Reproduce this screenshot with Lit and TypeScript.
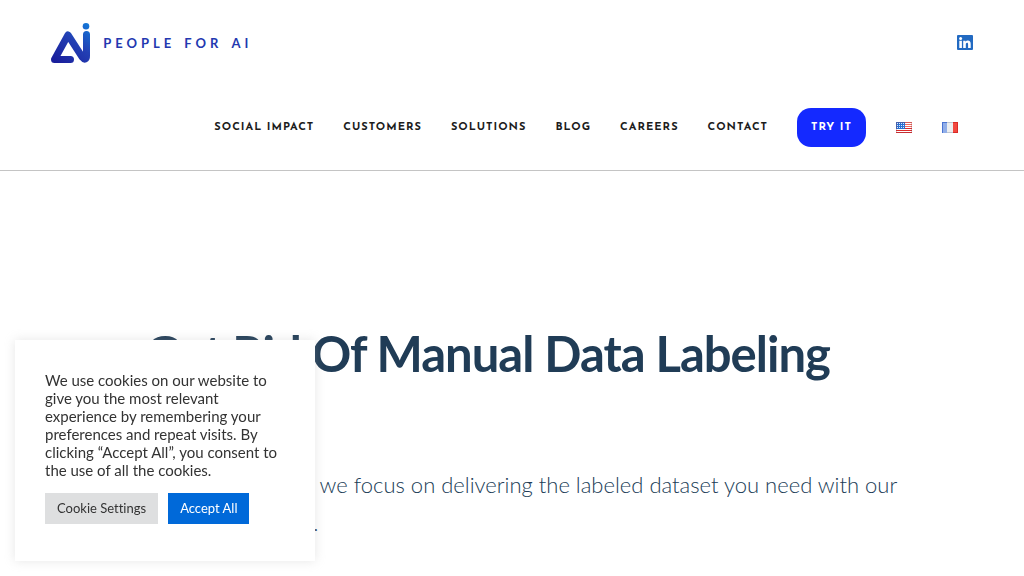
import { LitElement, html, css, svg } from "lit";
import { customElement, state } from "lit/decorators.js";

const LINKS = ["Social Impact", "Customers", "Solutions", "Blog", "Careers", "Contact"];

const logoMark = html`
  <svg class="mark" viewBox="0 0 40 42" width="40" height="42" aria-hidden="true">
    <defs>
      <linearGradient id="ink" gradientUnits="userSpaceOnUse" x1="6" y1="40" x2="38" y2="2">
        <stop offset="0" stop-color="#1a1f9c" />
        <stop offset="0.55" stop-color="#2340b4" />
        <stop offset="1" stop-color="#1478d8" />
      </linearGradient>
    </defs>
    <path d="M19.500 37.500H3.500L17 13L31.500 35.500Q33 37.500 34.300 37T35.500 34V12.500" fill="none" stroke="url(#ink)"
      stroke-width="7" stroke-linecap="round" stroke-linejoin="round" />
    <circle cx="35" cy="4.300" r="3.300" fill="url(#ink)" />
  </svg>`;

const linkedIn = html`
  <svg viewBox="0 0 16 16" width="16" height="16" aria-hidden="true">
    <rect width="16" height="15" rx="1" fill="#226ac2" />
    <g fill="#fff">
      <circle cx="3.600" cy="3.500" r="1.500" />
      <path d="M2.300 5.800h2.600V13H2.300zM6.200 5.800h2.300v1c.5-.8 1.300-1.200 2.300-1.200 2.100 0 2.900 1.300 2.900 3.400v4h-2.600V9.400c0-1-.3-1.600-1-1.600-.9 0-1.300.7-1.300 1.800V13H6.200z" />
    </g>
  </svg>`;

const usFlag = html`
  <svg viewBox="0 0 16 11" width="16" height="11" aria-hidden="true">
    <rect width="16" height="11" fill="#fff" />
    ${[0, 2, 4, 6, 8, 10].map((y) => svg`<rect y=${y} width="16" height="1" fill=${y > 4 ? "#dc2a2a" : "#f4685c"} />`)}
    <rect width="9" height="7" fill="#2a6fd0" />
    ${[1, 3, 5].map((y) => [1, 3, 5, 7].map((x) => svg`<rect x=${x} y=${y} width="1" height="1" fill="#dce9fb" />`))}
    <path d="M.5 .5h15v10H.5z" fill="none" stroke="#8b3b4b" stroke-opacity=".3" />
  </svg>`;

const frFlag = html`
  <svg viewBox="0 0 16 11" width="16" height="11" aria-hidden="true">
    <rect width="5" height="11" fill="#91aee8" />
    <path d="M0 0h5v1H1v10H0z" fill="#4a74d2" />
    <rect x="5" width="6" height="11" fill="#eceeef" />
    <rect x="11" width="5" height="11" fill="#f2493f" />
    <path d="M11 0h5v11h-5v-1h4V1h-4z" fill="#d92a26" />
    <path d="M5 0h6v1H5zM5 10h6v1H5z" fill="#bfc6cf" />
  </svg>`;

@customElement("site-header")
class SiteHeader extends LitElement {
  static styles = css`
    :host { display: block; border-bottom: 1px solid #c4c4c4; background: #fff; }
    .top { display: flex; justify-content: space-between; align-items: center; padding: 0 5%; height: 85px; }
    .logo { display: flex; align-items: center; gap: 12px; text-decoration: none; }
    .mark { display: block; }
    .name { display: flex; gap: 9px; font: 700 13px/16px Lato, sans-serif; letter-spacing: 4px; color: #2338b0; white-space: nowrap; }
    .social { display: block; line-height: 0; }
    .nav { display: flex; justify-content: flex-end; align-items: center; gap: 30px; height: 85px; padding: 0 66px 0 0; }
    .links { display: flex; align-items: center; gap: 29px; }
    .link { font: 700 11px/16px "Josefin Sans", Lato, sans-serif; letter-spacing: 1px; color: #1c1c1c;
      text-transform: uppercase; text-decoration: none; white-space: nowrap; }
    .cta { background: #1429ff; color: #fff; padding: 12px 14px 11px; border-radius: 14px; }
    .flag { line-height: 0; }
  `;
  render() {
    return html`
      <div class="top">
        <a class="logo" href="#">${logoMark}<span class="name"><span>PEOPLE</span> <span>FOR</span> <span>AI</span></span></a>
        <a class="social" href="#" aria-label="LinkedIn">${linkedIn}</a>
      </div>
      <nav class="nav">
        <div class="links">
          ${LINKS.map((l) => html`<a class="link" href="#">${l}</a>`)}
          <a class="link cta" href="#">Try it</a>
        </div>
        <a class="flag" href="#" aria-label="English">${usFlag}</a>
        <a class="flag" href="#" aria-label="Français">${frFlag}</a>
      </nav>`;
  }
}

@customElement("cookie-notice")
class CookieNotice extends LitElement {
  static styles = css`
    :host { display: block; box-sizing: border-box; width: 300px; padding: 31px 30px 37px; background: #fff;
      box-shadow: 0 0 10px rgba(172, 171, 171, 0.3); font-family: Lato, sans-serif; color: #333;
      font-variant-ligatures: none; }
    .text { margin: 0 0 14px; font-size: 15px; line-height: 18px; }
    .actions { display: flex; gap: 10px; }
    .btn { border: 0; margin: 0; padding: 8px 12px; font-family: Lato, sans-serif; font-size: 13px; line-height: 15px;
      font-variant-ligatures: none; cursor: pointer; }
    .settings { background: #dedfe0; color: #333; }
    .accept { background: #0069d9; color: #fff; }
  `;
  private accept() {
    this.dispatchEvent(new CustomEvent("accept"));
  }
  render() {
    return html`
      <p class="text">We use cookies on our website to give you the most relevant experience by remembering your
        preferences and repeat visits. By clicking “Accept All”, you consent to the use of all the cookies.</p>
      <div class="actions">
        <button class="btn settings" type="button">Cookie Settings</button>
        <button class="btn accept" type="button" @click=${this.accept}>Accept All</button>
      </div>`;
  }
}

@customElement("app-root")
class AppRoot extends LitElement {
  @state() private noticeOpen = true;

  static styles = css`
    :host { display: block; min-height: 100vh; background: #fff; font-family: Lato, sans-serif; color: #203c56; }
    .hero { padding: 147px 10% 0 145px; }
    .title { margin: 0; font-size: 49px; line-height: 70px; font-weight: 700; letter-spacing: -1px; }
    .lead { margin: 78px 0 0; font-size: 22px; line-height: 38px; font-weight: 300; }
    .notice { position: fixed; left: 15px; bottom: 15px; }
  `;
  render() {
    return html`
      <site-header></site-header>
      <main class="hero">
        <h1 class="title">Get Rid Of Manual Data Labeling</h1>
        <p class="lead">At People For A.I., we focus on delivering the labeled dataset you need with our
          expert annotators.</p>
      </main>
      ${this.noticeOpen
        ? html`<cookie-notice class="notice" role="dialog" aria-label="Cookies"
            @accept=${() => (this.noticeOpen = false)}></cookie-notice>`
        : null}`;
  }
}
